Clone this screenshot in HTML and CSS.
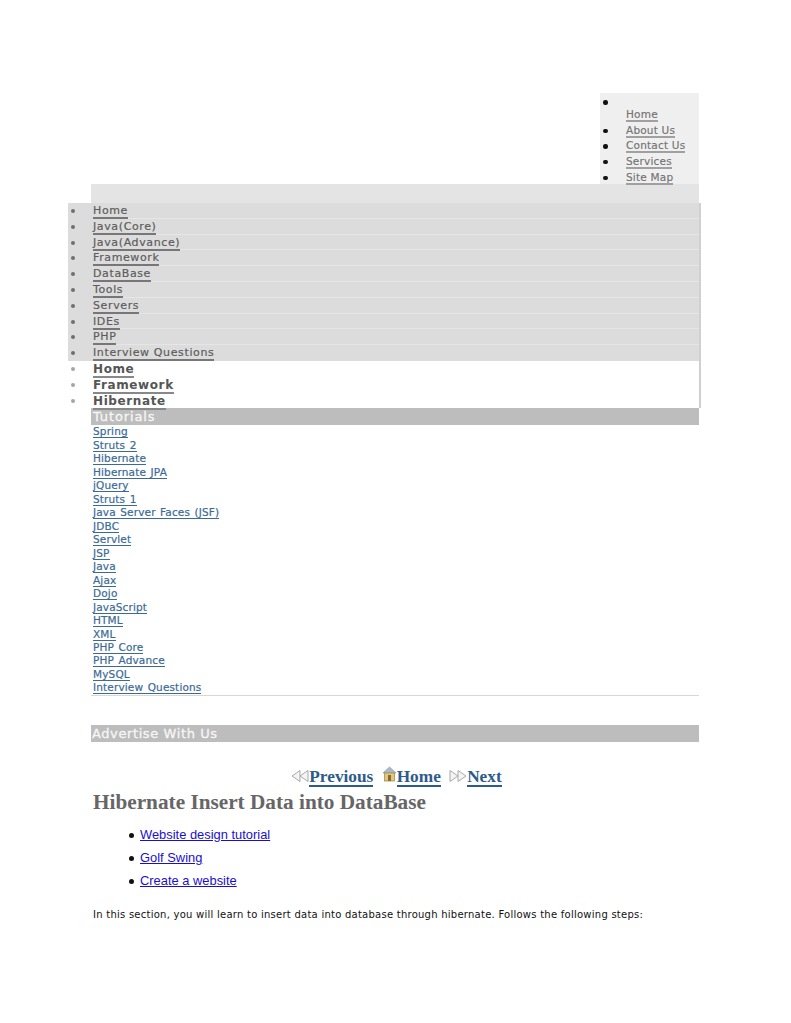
FILE: index.html
```html
<!DOCTYPE html>
<html lang="en">
<head>
<meta charset="utf-8">
<title>Hibernate Insert Data into DataBase</title>
<link rel="stylesheet" href="styles.css">
</head>
<body>
<div class="page">
  <ul class="toplinks">
    <li class="first"><a href="#">Home</a></li>
    <li><a href="#">About Us</a></li>
    <li><a href="#">Contact Us</a></li>
    <li><a href="#">Services</a></li>
    <li><a href="#">Site Map</a></li>
  </ul>
  <div class="band"></div>
  <div class="navwrap">
    <ul class="mainnav">
      <li><a href="#">Home</a></li>
      <li><a href="#">Java(Core)</a></li>
      <li><a href="#">Java(Advance)</a></li>
      <li><a href="#">Framework</a></li>
      <li><a href="#">DataBase</a></li>
      <li><a href="#">Tools</a></li>
      <li><a href="#">Servers</a></li>
      <li><a href="#">IDEs</a></li>
      <li><a href="#">PHP</a></li>
      <li><a href="#">Interview Questions</a></li>
    </ul>
    <ul class="crumbs">
      <li><a href="#">Home</a></li>
      <li><a href="#">Framework</a></li>
      <li><a href="#">Hibernate</a></li>
    </ul>
  </div>
  <h3 class="sidehead">Tutorials</h3>
  <ul class="tutorials">
    <li><a href="#">Spring</a></li>
    <li><a href="#">Struts 2</a></li>
    <li><a href="#">Hibernate</a></li>
    <li><a href="#">Hibernate JPA</a></li>
    <li><a href="#">jQuery</a></li>
    <li><a href="#">Struts 1</a></li>
    <li><a href="#">Java Server Faces (JSF)</a></li>
    <li><a href="#">JDBC</a></li>
    <li><a href="#">Servlet</a></li>
    <li><a href="#">JSP</a></li>
    <li><a href="#">Java</a></li>
    <li><a href="#">Ajax</a></li>
    <li><a href="#">Dojo</a></li>
    <li><a href="#">JavaScript</a></li>
    <li><a href="#">HTML</a></li>
    <li><a href="#">XML</a></li>
    <li><a href="#">PHP Core</a></li>
    <li><a href="#">PHP Advance</a></li>
    <li><a href="#">MySQL</a></li>
    <li><a href="#">Interview Questions</a></li>
  </ul>
  <h3 class="sidehead advert">Advertise With Us</h3>
  <div class="pager">
    <svg class="icon" width="18" height="14" viewBox="0 0 18 14"><path d="M9 1.500 1 7l8 5.500M17 1.500 9 7l8 5.500z" fill="#f4f4f4" stroke="#a9a9a9"/><path d="M9 1.500V12.500" stroke="#a9a9a9"/></svg><a href="#">Previous</a>
    <svg class="icon homeicon" width="15" height="16" viewBox="0 0 15 16"><path d="M1 7 7.500 1 14 7z" fill="#a9bccb" stroke="#8a9aa8" stroke-width=".7"/><rect x="2.500" y="7" width="10" height="8" fill="#e2c77e" stroke="#a78d4d" stroke-width=".8"/><rect x="6" y="9" width="3" height="6" fill="#8a6a2d"/></svg><a href="#">Home</a>
    <svg class="icon nexticon" width="18" height="14" viewBox="0 0 18 14"><path d="M1 1.500 9 7l-8 5.500zM9 1.500 17 7l-8 5.500z" fill="#f4f4f4" stroke="#a9a9a9"/></svg><a href="#">Next</a>
  </div>
  <h1 class="title">Hibernate Insert Data into DataBase</h1>
  <ul class="ads">
    <li><a href="#">Website design tutorial</a></li>
    <li><a href="#">Golf Swing</a></li>
    <li><a href="#">Create a website</a></li>
  </ul>
  <p class="intro">In this section, you will learn to insert data into database through hibernate. Follows the following steps:</p>
</div>
</body>
</html>
```
FILE: styles.css
```css
html, body { margin: 0; padding: 0; background: #fff; }
body { font-family: "DejaVu Sans", sans-serif; color: #111; }
.page { width: 608px; margin-left: 91px; padding-top: 93px; }
ul { list-style: none; margin: 0; padding: 0; }
a { text-decoration: none; }

.toplinks { width: 73px; margin-left: 509px; padding-left: 26px; background: #efefef; height: 91px; font-size: 10.500px; -webkit-text-stroke: .15px; }
.toplinks li { position: relative; height: 15.700px; line-height: 15.700px; }
.toplinks li::before { content: ""; position: absolute; left: -23px; top: 6px; width: 4.500px; height: 4.500px; border-radius: 50%; background: #111; }
.toplinks li.first { height: 29.500px; padding-top: 14px; box-sizing: border-box; line-height: 15px; }
.toplinks li.first::before { top: 7px; }
.toplinks a { color: #737373; border-bottom: 2px solid #a0a0a0; letter-spacing: .2px; }

.band { height: 19px; background: #e4e4e4; }
.navwrap { margin-left: -23px; margin-right: -2px; width: 631px; border-right: 2px solid #d0d0d0; }
.mainnav { background: #dcdcdc; padding-left: 25px; font-size: 11px; -webkit-text-stroke: .2px; }
.mainnav li { position: relative; height: 15.800px; line-height: 15px; border-bottom: 1px solid #e6e6e6; box-sizing: border-box; }
.mainnav li:last-child { border-bottom: 0; }
.mainnav li::before, .crumbs li::before { content: ""; position: absolute; left: -22px; top: 6px; width: 4px; height: 4px; border-radius: 50%; background: #6f6f6f; }
.mainnav a { color: #5c5c5c; border-bottom: 2px solid #777; letter-spacing: .62px; }
.crumbs { padding-left: 25px; font-size: 12px; font-weight: bold; height: 47px; }
.crumbs li { position: relative; height: 15.900px; line-height: 16px; }
.crumbs li::before { background: #a5a5a5; }
.crumbs a { color: #555; border-bottom: 2px solid #888; letter-spacing: .6px; }

.sidehead { margin: 0; height: 17px; line-height: 17px; background: #bdbdbd; color: #f6f6f6; font-size: 13px; font-weight: normal; padding-left: 2px; letter-spacing: .88px; -webkit-text-stroke: .3px; }
.tutorials { padding-left: 2px; padding-top: .500px; height: 269.500px; border-bottom: 1px solid #d8d8d8; font-size: 10.500px; -webkit-text-stroke: .2px; }
.tutorials li { height: 13.470px; line-height: 13.470px; }
.tutorials a { color: #3b6a96; border-bottom: 1px solid #3b6a96; letter-spacing: .15px; word-spacing: 1px; }
.advert { margin-top: 29px; line-height: 18px; font-size: 13px; letter-spacing: .6px; padding-left: 1px; }

.pager { margin-top: 24px; height: 20px; padding-left: 3px; box-sizing: border-box; text-align: center; font-family: "Liberation Serif", serif; font-size: 17.300px; font-weight: bold; line-height: 20px; white-space: nowrap; }
.pager a { color: #2d5b8a; border-bottom: 2px solid #2d5b8a; line-height: 17px; display: inline-block; }
.icon { vertical-align: -1px; }
.homeicon { vertical-align: 0; margin-left: 4px; }
.nexticon { margin-left: 4px; }
.title { margin: 3px 0 0 2px; height: 27px; line-height: 27px; font-family: "Liberation Serif", serif; font-size: 21.250px; font-weight: bold; color: #666; }
.ads { margin-top: 10px; padding-left: 49px; font-family: "Liberation Sans", sans-serif; font-size: 12.900px; }
.ads li { position: relative; height: 23px; line-height: 18px; }
.ads li::before { content: ""; position: absolute; left: -11px; top: 7px; width: 5px; height: 5px; border-radius: 50%; background: #111; }
.ads a { color: #1a0fd0; text-decoration: underline; }
.intro { margin: 13px 0 0 2px; font-size: 10px; line-height: 14px; color: #111; letter-spacing: .25px; white-space: nowrap; }
```
